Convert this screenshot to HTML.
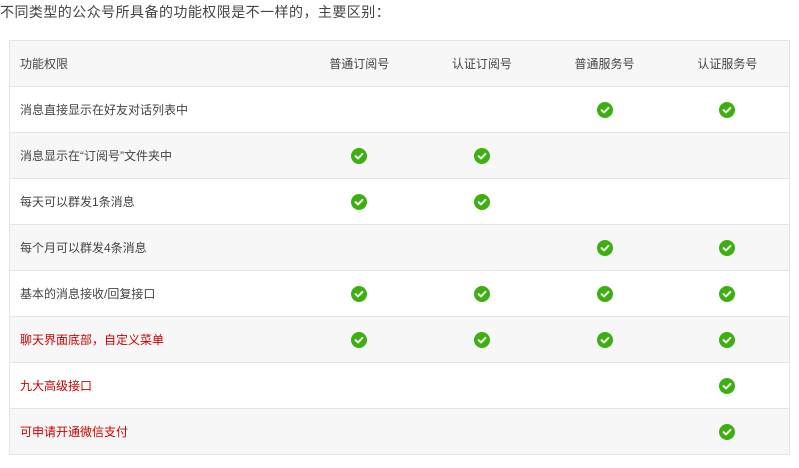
<!DOCTYPE html>
<html><head><meta charset="utf-8"><style>
body{margin:0;background:#fff;font-family:"Liberation Sans","Noto Sans CJK SC",sans-serif;color:#444;width:799px;height:468px;overflow:hidden;position:relative}
.t{position:absolute;left:0;top:2px;font-size:14px;line-height:20px;color:#444;letter-spacing:0.45px}
table{position:absolute;left:9px;top:40px;border-collapse:collapse;width:781px;font-size:12px}
td{height:45px;border:1px solid #e5e5e5;border-left:none;border-right:none;padding:0;text-align:center;vertical-align:middle}
tr td:first-child{border-left:1px solid #e5e5e5;text-align:left;padding-left:10px;width:278px}
tr td:last-child{border-right:1px solid #e5e5e5}
tr:nth-child(odd){background:#f7f7f7}
.r{color:#c00}
.c{display:inline-block;width:16px;height:16px;vertical-align:middle}
</style></head><body>
<div class="t">不同类型的公众号所具备的功能权限是不一样的，主要区别：</div>
<table>
<tr><td>功能权限</td><td>普通订阅号</td><td>认证订阅号</td><td>普通服务号</td><td>认证服务号</td></tr>
<tr><td>消息直接显示在好友对话列表中</td><td></td><td></td><td>Y</td><td>Y</td></tr>
<tr><td>消息显示在“订阅号”文件夹中</td><td>Y</td><td>Y</td><td></td><td></td></tr>
<tr><td>每天可以群发1条消息</td><td>Y</td><td>Y</td><td></td><td></td></tr>
<tr><td>每个月可以群发4条消息</td><td></td><td></td><td>Y</td><td>Y</td></tr>
<tr><td>基本的消息接收/回复接口</td><td>Y</td><td>Y</td><td>Y</td><td>Y</td></tr>
<tr><td class="r">聊天界面底部，自定义菜单</td><td>Y</td><td>Y</td><td>Y</td><td>Y</td></tr>
<tr><td class="r">九大高级接口</td><td></td><td></td><td></td><td>Y</td></tr>
<tr><td class="r">可申请开通微信支付</td><td></td><td></td><td></td><td>Y</td></tr>
</table>
<script>
document.querySelectorAll('td').forEach(function(td){if(td.textContent==='Y'){td.innerHTML='<svg class="c" viewBox="0 0 16 16"><circle cx="8" cy="8" r="8" fill="#3bb010"/><path d="M4.6 8.2 L7 10.4 L11.4 5.9" stroke="#fff" stroke-width="2" fill="none" stroke-linecap="round" stroke-linejoin="round"/></svg>';}});
</script>
</body></html>
